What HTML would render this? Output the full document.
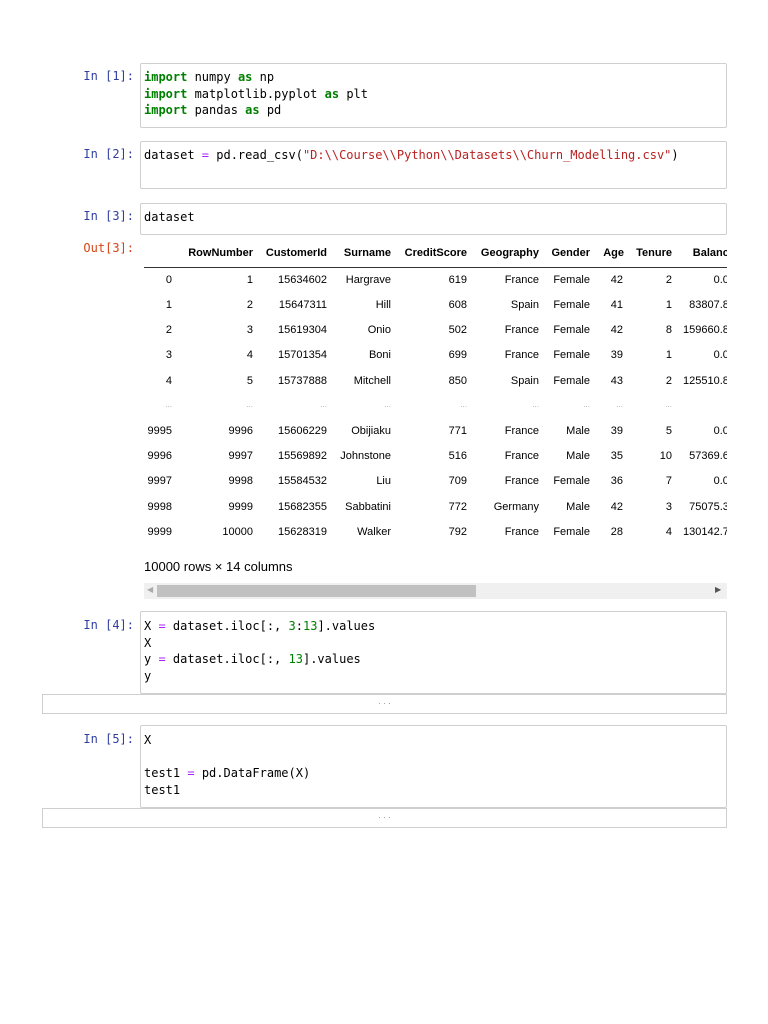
<!DOCTYPE html>
<html><head><style>
body{margin:0;width:768px;height:1024px;background:#fff;position:relative;overflow:hidden;font-family:"Liberation Sans",sans-serif}
.p{position:absolute;font-family:"DejaVu Sans Mono","Liberation Mono",monospace;font-size:12px;color:#303f9f;text-align:right;width:94px;left:40px}
.o{color:#d84315}
.c{position:absolute;left:140px;width:585px;border:1px solid #cfcfcf;background:#fff;border-radius:2px}
.code{position:absolute;left:144px;font-family:"DejaVu Sans Mono","Liberation Mono",monospace;font-size:12px;line-height:16.5px;color:#000;white-space:pre}
.k{color:#008000;font-weight:bold}.s{color:#ba2121}.n{color:#008000}.op{color:#aa22ff}
.bar{position:absolute;left:42px;width:683px;height:18px;border:1px solid #cfcfcf;color:#999;font-size:9px;text-align:center;line-height:12px}
.tbl{position:absolute;left:140px;top:241px;width:587px;height:310px;overflow:hidden;font-size:11px;color:#000}
.r{position:absolute;left:0;width:700px;height:14px}
.r span{position:absolute;text-align:right;white-space:nowrap}
.h span{font-weight:bold}
.e span{color:#aaa;font-size:8px}
</style></head><body>
<div class="p" style="top:69px">In [1]:</div>
<div class="c" style="top:63px;height:63px"></div>
<div class="code" style="top:69px"><span class="k">import</span> numpy <span class="k">as</span> np
<span class="k">import</span> matplotlib.pyplot <span class="k">as</span> plt
<span class="k">import</span> pandas <span class="k">as</span> pd</div>

<div class="p" style="top:147px">In [2]:</div>
<div class="c" style="top:141px;height:46px"></div>
<div class="code" style="top:147px">dataset <span class="op">=</span> pd.read_csv(<span class="s">"D:\\Course\\Python\\Datasets\\Churn_Modelling.csv"</span>)</div>

<div class="p" style="top:209px">In [3]:</div>
<div class="c" style="top:203px;height:30px"></div>
<div class="code" style="top:209px">dataset</div>

<div class="p o" style="top:241px">Out[3]:</div>
<div class="tbl">
<div class="r h" style="top:6px"><span style="left:0;width:113px">RowNumber</span><span style="left:116px;width:71px">CustomerId</span><span style="left:190px;width:61px">Surname</span><span style="left:258px;width:69px">CreditScore</span><span style="left:332px;width:67px">Geography</span><span style="left:405px;width:45px">Gender</span><span style="left:455px;width:29px">Age</span><span style="left:490px;width:42px">Tenure</span><span style="left:540px;width:55px">Balance</span></div>
<div style="position:absolute;left:4px;top:26px;width:590px;height:1px;background:#333"></div>
</div>
<div class="tbl" id="t2"></div>

<div style="position:absolute;left:144px;top:559px;font-size:13px;color:#000">10000 rows × 14 columns</div>
<div style="position:absolute;left:144px;top:583px;width:583px;height:16px;background:#f0f0f0"></div>
<div style="position:absolute;left:157px;top:585px;width:319px;height:12px;background:#c1c1c1"></div>
<div style="position:absolute;left:147px;top:585px;font-size:8px;color:#aaa">◀</div>
<div style="position:absolute;left:715px;top:585px;font-size:8px;color:#555">▶</div>

<div class="p" style="top:618px">In [4]:</div>
<div class="c" style="top:611px;height:81px"></div>
<div class="code" style="top:618px">X <span class="op">=</span> dataset.iloc[:, <span class="n">3</span>:<span class="n">13</span>].values
X
y <span class="op">=</span> dataset.iloc[:, <span class="n">13</span>].values
y</div>
<div class="bar" style="top:694px">. . .</div>

<div class="p" style="top:732px">In [5]:</div>
<div class="c" style="top:725px;height:81px"></div>
<div class="code" style="top:732px">X

test1 <span class="op">=</span> pd.DataFrame(X)
test1</div>
<div class="bar" style="top:808px">. . .</div>

<script>
var rows=[
["0","1","15634602","Hargrave","619","France","Female","42","2","0.00"],
["1","2","15647311","Hill","608","Spain","Female","41","1","83807.86"],
["2","3","15619304","Onio","502","France","Female","42","8","159660.80"],
["3","4","15701354","Boni","699","France","Female","39","1","0.00"],
["4","5","15737888","Mitchell","850","Spain","Female","43","2","125510.82"],
["...","...","...","...","...","...","...","...","...",""],
["9995","9996","15606229","Obijiaku","771","France","Male","39","5","0.00"],
["9996","9997","15569892","Johnstone","516","France","Male","35","10","57369.61"],
["9997","9998","15584532","Liu","709","France","Female","36","7","0.00"],
["9998","9999","15682355","Sabbatini","772","Germany","Male","42","3","75075.31"],
["9999","10000","15628319","Walker","792","France","Female","28","4","130142.79"]];
var cols=[[0,32],[40,73],[116,71],[190,61],[258,69],[332,67],[405,45],[455,28],[490,42],[540,55]];
var ys=[33,58,83,108,134,159,184,209,234,260,285];
var h='';
rows.forEach(function(r,i){h+='<div class="r'+(i==5?' e':'')+'" style="top:'+ys[i]+'px">';
r.forEach(function(v,j){var c=cols[j];h+='<span style="left:'+c[0]+'px;width:'+c[1]+'px">'+v+'</span>';});h+='</div>';});
document.getElementById('t2').innerHTML=h;
</script>
</body></html>
